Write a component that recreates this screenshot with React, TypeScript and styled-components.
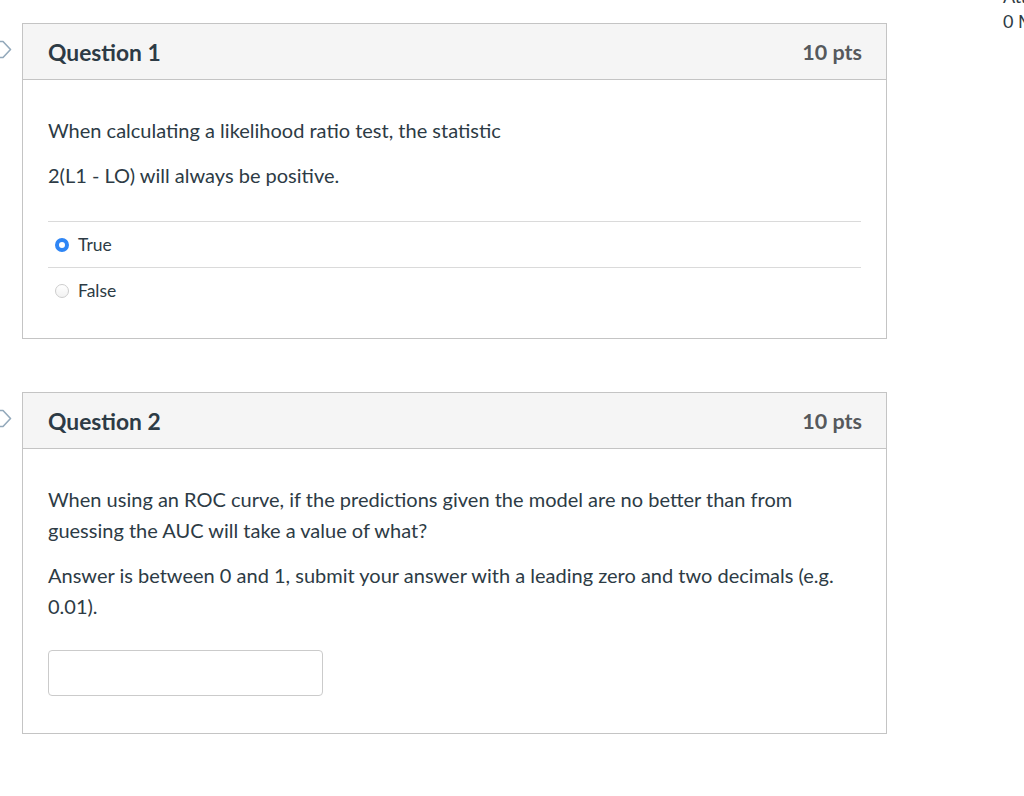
import React from 'react';
import styled, { createGlobalStyle } from 'styled-components';

const GlobalStyle = createGlobalStyle`
  html, body {
    margin: 0;
    padding: 0;
    background: #fff;
    overflow: hidden;
  }
  body {
    font-family: Lato, "Open Sans", "Liberation Sans", sans-serif;
    color: #2d3b45;
  }
`;

const Page = styled.div`
  display: flex;
  align-items: flex-start;
  padding: 23px 0 0 22px;
  width: 1300px;
`;

const Questions = styled.div`
  display: flex;
  flex-direction: column;
  gap: 53px;
  width: 865px;
  flex: none;
`;

const Card = styled.section`
  position: relative;
  border: 1px solid #c4c4c4;
  background: #fff;
`;

const Flag = styled.svg`
  position: absolute;
  left: -40px;
  top: 16px;
`;

const Header = styled.header`
  display: flex;
  align-items: center;
  justify-content: space-between;
  height: 55px;
  padding: 0 24px 0 25px;
  background: #f5f5f5;
  border-bottom: 1px solid #c4c4c4;
`;

const Title = styled.h2`
  margin: 0;
  font-size: 22.8px;
  font-weight: 700;
  color: #2d3b45;
`;

const Points = styled.span`
  font-size: 21.5px;
  font-weight: 700;
  color: #56595c;
`;

const Body = styled.div<{ $bottom: number }>`
  padding: 35px 25px ${(p) => p.$bottom}px;
`;

const Text = styled.p`
  margin: 0 0 14px;
  font-size: 20px;
  line-height: 31px;
  color: #2d3b45;
`;

const Answers = styled.div`
  margin-top: 30px;
`;

const Answer = styled.label`
  box-sizing: border-box;
  display: flex;
  align-items: center;
  gap: 9px;
  height: 46px;
  padding-left: 7px;
  border-top: 1px solid #dadada;
  font-size: 17.5px;
  color: #2d3b45;
`;

const Radio = styled.span<{ $checked?: boolean }>`
  box-sizing: border-box;
  width: 14px;
  height: 14px;
  border-radius: 50%;
  flex: none;
  ${(p) =>
    p.$checked
      ? `
    background: #fff;
    border: 4px solid #2f86f5;
  `
      : `
    background: linear-gradient(#fff, #f2f2f2);
    border: 1px solid #cdcdcd;
  `}
`;

const Input = styled.input`
  display: block;
  box-sizing: border-box;
  width: 275px;
  height: 46px;
  margin-top: 28px;
  border: 1px solid #cbcbcb;
  border-radius: 4px;
  background: #fff;
  font-size: 16px;
  font-family: inherit;
`;

const Sidebar = styled.aside`
  margin: -39px 0 0 116px;
  font-size: 18px;
  line-height: 25px;
  color: #2d3b45;
  white-space: nowrap;
`;

const FlagIcon = () => (
  <Flag width="30" height="19" viewBox="0 0 30 19">
    <path d="M1 1.5 H20 L27.5 9.5 L20 17.5 H1 Z" fill="none" stroke="#93a9bb" strokeWidth="1.6" strokeLinejoin="round" />
  </Flag>
);

export default function App() {
  return (
    <>
      <GlobalStyle />
      <Page>
        <Questions>
          <Card>
            <FlagIcon />
            <Header>
              <Title>Question 1</Title>
              <Points>10 pts</Points>
            </Header>
            <Body $bottom={25}>
              <Text>When calculating a likelihood ratio test, the statistic</Text>
              <Text>2(L1 - LO) will always be positive.</Text>
              <Answers>
                <Answer>
                  <Radio $checked />
                  True
                </Answer>
                <Answer>
                  <Radio />
                  False
                </Answer>
              </Answers>
            </Body>
          </Card>
          <Card>
            <FlagIcon />
            <Header>
              <Title>Question 2</Title>
              <Points>10 pts</Points>
            </Header>
            <Body $bottom={37}>
              <Text>
                When using an ROC curve, if the predictions given the model are no better than from
                guessing the AUC will take a value of what?
              </Text>
              <Text>
                Answer is between 0 and 1, submit your answer with a leading zero and two decimals (e.g.
                0.01).
              </Text>
              <Input type="text" />
            </Body>
          </Card>
        </Questions>
        <Sidebar>
          <div>Attempt History</div>
          <div>0 Minutes, 42 Seconds</div>
        </Sidebar>
      </Page>
    </>
  );
}
